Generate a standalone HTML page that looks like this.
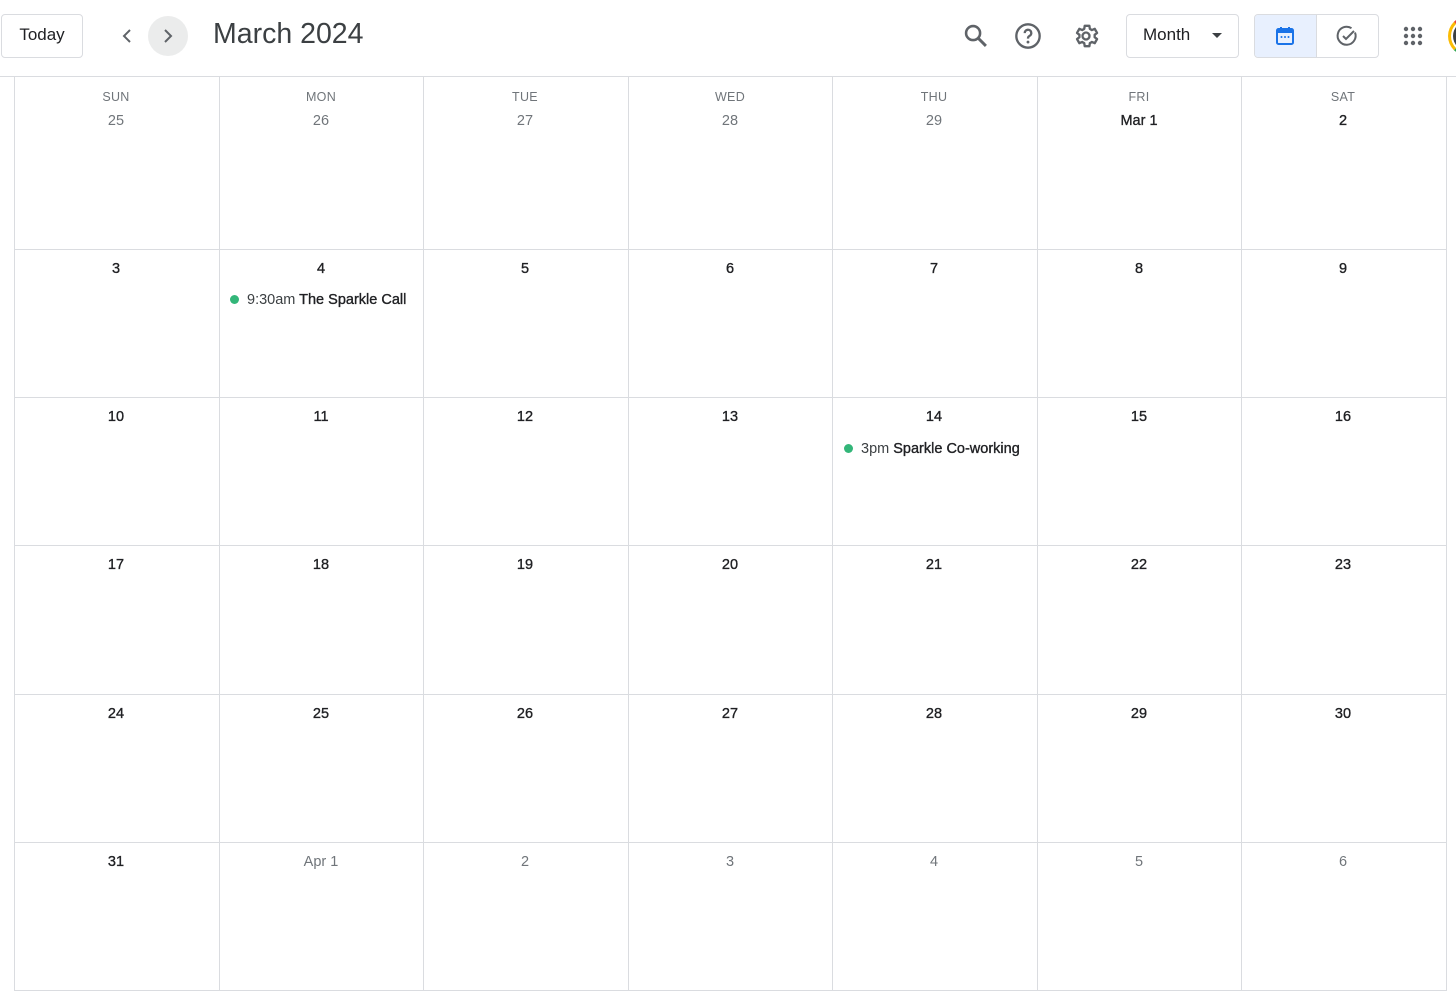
<!DOCTYPE html>
<html><head><meta charset="utf-8"><style>
*{margin:0;padding:0;box-sizing:border-box}
body{width:1456px;height:991px;background:#fff;font-family:"Liberation Sans",Arial,sans-serif;position:relative;overflow:hidden;color:#3c4043}
.abs{position:absolute}
.btn{position:absolute;border:1px solid #dadce0;border-radius:4px;background:#fff}
.hl{position:absolute;height:1px;background:#dadce0}
.vl{position:absolute;width:1px;background:#dadce0}
.dow{position:absolute;font-size:12.5px;color:#70757a;text-align:center;width:204px;letter-spacing:.3px}
.num{position:absolute;font-size:14.5px;text-align:center;width:204px;color:#202124;-webkit-text-stroke:.35px #202124}
.num.o{-webkit-text-stroke:0;color:#70757a}
.ev{position:absolute;font-size:14.5px;color:#3c4043;white-space:nowrap}
.ev span{color:#202124;-webkit-text-stroke:.35px #202124}
.ev i{display:inline-block;width:9px;height:9px;border-radius:50%;background:#33b679;margin-right:8px;vertical-align:0}
</style></head><body>
<div class="btn" style="left:1px;top:14px;width:82px;height:44px;"></div>
<div class="abs" style="left:1px;top:25px;width:82px;text-align:center;font-size:17px;color:#202124">Today</div>
<svg class="abs" style="left:117px;top:26px" width="20" height="20" viewBox="0 0 20 20"><path d="M13 4 L7 10 L13 16" fill="none" stroke="#5f6368" stroke-width="2"/></svg>
<div class="abs" style="left:148px;top:16px;width:40px;height:40px;border-radius:50%;background:#ebecec"></div>
<svg class="abs" style="left:158px;top:26px" width="20" height="20" viewBox="0 0 20 20"><path d="M7 4 L13 10 L7 16" fill="none" stroke="#5f6368" stroke-width="2"/></svg>
<div class="abs" style="left:213px;top:18px;font-size:28.5px;color:#3c4043">March 2024</div>
<svg class="abs" style="left:962px;top:22px" width="28" height="28" viewBox="0 0 24 24"><circle cx="9.5" cy="9.5" r="6" fill="none" stroke="#5f6368" stroke-width="2.2"/><path d="M14 14 L20.5 20.5" stroke="#5f6368" stroke-width="2.5"/></svg>
<svg class="abs" style="left:1014px;top:22px" width="28" height="28" viewBox="0 0 24 24"><circle cx="12" cy="12" r="10" fill="none" stroke="#5f6368" stroke-width="2"/><path d="M9.2 9.5 a2.8 2.8 0 1 1 4 2.5 c-1 .5 -1.2 1.2 -1.2 2.2" fill="none" stroke="#5f6368" stroke-width="2"/><circle cx="12" cy="17.2" r="1.2" fill="#5f6368"/></svg>
<svg class="abs" style="left:1072px;top:22px" width="28" height="28" viewBox="0 0 24 24"><path fill="none" stroke="#5f6368" stroke-width="2" stroke-linejoin="round" d="M19.4 13a7.5 7.5 0 0 0 0-2l2.1-1.6-2-3.5-2.5 1a7.6 7.6 0 0 0-1.7-1L14.9 3.3h-4l-.4 2.6a7.6 7.6 0 0 0-1.7 1l-2.5-1-2 3.5L6.4 11a7.5 7.5 0 0 0 0 2l-2.1 1.6 2 3.5 2.5-1a7.6 7.6 0 0 0 1.7 1l.4 2.6h4l.4-2.6a7.6 7.6 0 0 0 1.7-1l2.5 1 2-3.5z"/><circle cx="12" cy="12" r="3" fill="none" stroke="#5f6368" stroke-width="2"/></svg>
<div class="btn" style="left:1126px;top:14px;width:113px;height:44px"></div>
<div class="abs" style="left:1143px;top:25px;font-size:17px;color:#202124">Month</div>
<svg class="abs" style="left:1211px;top:32px" width="12" height="8"><path d="M1 1 L6 6 L11 1Z" fill="#3c4043"/></svg>
<div class="btn" style="left:1254px;top:14px;width:125px;height:44px;overflow:hidden"><div style="position:absolute;left:0;top:0;width:62px;height:44px;background:#e8f0fe;border-right:1px solid #dadce0"></div></div>
<svg class="abs" style="left:1274px;top:25px" width="22" height="22" viewBox="0 0 22 22"><rect x="3" y="4" width="16" height="15" rx="1.5" fill="none" stroke="#1a73e8" stroke-width="2"/><rect x="3" y="4" width="16" height="4" fill="#1a73e8"/><path d="M7 2v3M15 2v3" stroke="#1a73e8" stroke-width="2"/><circle cx="7.5" cy="12" r="1" fill="#1a73e8"/><circle cx="11" cy="12" r="1" fill="#1a73e8"/><circle cx="14.5" cy="12" r="1" fill="#1a73e8"/></svg>
<svg class="abs" style="left:1335px;top:24px" width="24" height="24" viewBox="0 0 24 24"><path d="M20 8.5A9 9 0 1 1 16.5 4.2" fill="none" stroke="#5f6368" stroke-width="2"/><path d="M8 12l3 3 8-8" fill="none" stroke="#5f6368" stroke-width="2"/></svg>
<svg class="abs" style="left:1402px;top:25px" width="22" height="22" viewBox="0 0 22 22"><g fill="#5f6368"><circle cx="4" cy="4" r="2.2"/><circle cx="11" cy="4" r="2.2"/><circle cx="18" cy="4" r="2.2"/><circle cx="4" cy="11" r="2.2"/><circle cx="11" cy="11" r="2.2"/><circle cx="18" cy="11" r="2.2"/><circle cx="4" cy="18" r="2.2"/><circle cx="18" cy="18" r="2.2"/><circle cx="11" cy="18" r="2.2"/></g></svg>
<div class="abs" style="left:1448px;top:16px;width:40px;height:40px;border-radius:50%;border:3px solid #ea4335;border-left-color:#fbbc04;border-bottom-color:#34a853"></div>
<div class="abs" style="left:1453px;top:21px;width:30px;height:30px;border-radius:50%;background:#3c4043"></div>
<div class="hl" style="left:0;top:76px;width:1456px"></div>
<div id="g"></div>
<script>
var xs=[14,219,423,628,832,1037,1241,1446];
var ys=[76,249,397,545,694,842,990];
var h='';
xs.forEach(x=>h+='<div class="vl" style="left:'+x+'px;top:76px;height:915px"></div>');
ys.slice(1).forEach(y=>h+='<div class="hl" style="left:14px;top:'+y+'px;width:1433px"></div>');
var dn=['SUN','MON','TUE','WED','THU','FRI','SAT'];
var rows=[[['25',1],['26',1],['27',1],['28',1],['29',1],['Mar 1',0],['2',0]]];
var d=3;
for(var r=1;r<6;r++){var row=[];for(var c=0;c<7;c++){if(d<=31){row.push([''+d,0]);d++}else{var n=d-31;row.push([n==1?'Apr 1':''+n,1]);d++}}rows.push(row)}
for(var c=0;c<7;c++){var l=xs[c];h+='<div class="dow" style="left:'+l+'px;top:90px">'+dn[c]+'</div>';}
rows.forEach((row,r)=>row.forEach((v,c)=>{var l=xs[c];var t=r==0?113:ys[r]+12;h+='<div class="num'+(v[1]?' o':'')+'" style="left:'+l+'px;top:'+t+'px">'+v[0]+'</div>';}));
h+='<div class="ev" style="left:230px;top:292px"><i></i>9:30am <span>The Sparkle Call</span></div>';
h+='<div class="ev" style="left:844px;top:441px"><i></i>3pm <span>Sparkle Co-working</span></div>';
document.getElementById('g').innerHTML=h;
</script>
</body></html>
